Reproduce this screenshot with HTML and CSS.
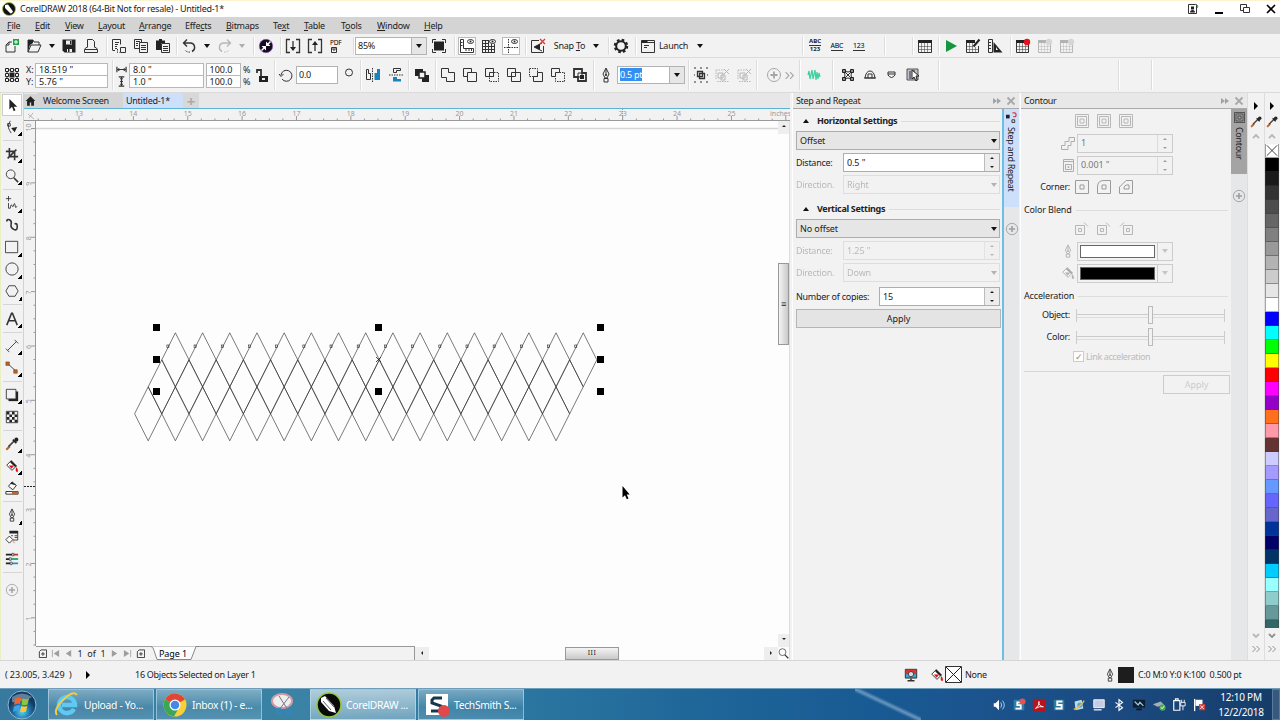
FILE: index.html
```html
<!DOCTYPE html>
<html lang="en">
<head>
    <meta charset="UTF-8">
    <meta name="viewport" content="width=device-width, initial-scale=1.0">
    <title>CorelDRAW 2018</title>
    <link rel="stylesheet" href="styles.css">
</head>
<body>
    <!-- Icon set -->
    <svg class="defs" width="0" height="0">
        <symbol id="new" viewBox="0 0 16 16"><path d="M8 4H5L2 7v7h9V8M5 4v3H2" class="l"/><path d="M9 1h6v6H9z" fill="#1fa24a"/><path d="M12 2v4M10 4h4" stroke="#fff"/></symbol>
        <symbol id="open" viewBox="0 0 16 16"><path d="M2 14V2h5l1 2h5v3" class="l"/><path d="M2 14L5 7h10l-3 7z" class="l"/><path d="M2 2h5v3L4 7l-2 6z" class="f"/></symbol>
        <symbol id="save" viewBox="0 0 16 16"><path d="M1.500 1.500h13v13h-11l-2-2z" class="f"/><path d="M5 2.500h6v4H5zM6 11h5v3H6z" fill="#eee"/><path d="M9 3h1.500v3H9zM7 11h1.500v3H7z" class="f"/></symbol>
        <symbol id="print" viewBox="0 0 16 16"><path d="M4.500 9.500v-8h5l2 2v6M4 9.500H3l-1.500 2v3h13v-3l-1.500-2h-1M2 11.500h12" class="l"/></symbol>
        <symbol id="cut" viewBox="0 0 16 16"><path d="M1.500 12.500v-11h8v5M4 4.500h4M4 6.500h3M4 8.500h2M4 10.500h2M2 12.500h2" class="l"/><path d="M9.500 14.500v-5h5v5z" class="l"/><path d="M6.500 11v3.500h2" class="l d"/></symbol>
        <symbol id="copy" viewBox="0 0 16 16"><path d="M6.500 10.500h-5v-9h7v3M3 3.500h4M3 5.500h2M3 7.500h2M6.500 4.500h8v10h-8zM8 7.500h5M8 9.500h5M8 11.500h5" class="l"/></symbol>
        <symbol id="paste" viewBox="0 0 16 16"><path d="M1 2.500h3V1h3v1.500h3V5H6v7H1z" class="f"/><path d="M6.500 5.500h8v9h-8zM8 8.500h5M8 10.500h5M8 12.500h5" class="l"/></symbol>
        <symbol id="undo" viewBox="0 0 16 16"><path d="M3 5h7a4.500 4.500 0 0 1 1 8.500M6 1.500L2.500 5 6 8.500" class="l" stroke-width="1.400"/><path d="M9 14a5 5 0 0 1-5-2" class="l d"/></symbol>
        <symbol id="redo" viewBox="0 0 16 16"><path d="M13 5H6a4.500 4.500 0 0 0-1 8.500M10 1.500L13.500 5 10 8.500" class="l" stroke-width="1.400"/><path d="M7 14a5 5 0 0 0 5-2" class="l d"/></symbol>
        <symbol id="connect" viewBox="0 0 16 16"><circle cx="8" cy="8" r="6.700" fill="#130b1e" stroke="#8d54b5" stroke-width=".7"/><path d="M3.500 12.500l3-3M12.500 3.500l-3 3" stroke="#fff" stroke-width="1.500"/><path d="M3.500 8H8v4.500zM12.500 8H8V3.500z" fill="#fff"/></symbol>
        <symbol id="import" viewBox="0 0 16 16"><path d="M5 1.500H1.500v13H5M11 1.500h3.500v13H11M8 3v8" class="l" stroke-width="1.300"/><path d="M5 9h6l-3 4z" class="f"/></symbol>
        <symbol id="export" viewBox="0 0 16 16"><path d="M5 1.500H1.500v13H5M11 1.500h3.500v13H11M8 13V5" class="l" stroke-width="1.300"/><path d="M5 7h6L8 3z" class="f"/></symbol>
        <symbol id="full" viewBox="0 0 16 16"><path d="M3 3.500h10v9H3z" class="f"/><path d="M1.500 5V1.500H5M11 1.500h3.500V5M14.500 11v3.500H11M5 14.500H1.500V11" class="l"/></symbol>
        <symbol id="rulers" viewBox="0 0 16 16"><path d="M1.500 1.500h3v9h10v4h-13zM2 4.500h1.500M2 7.500h1.500M7 11v2M10 11v2M12.500 11v2" class="l"/><ellipse cx="11.500" cy="3.500" rx="3" ry="2" class="l"/><circle cx="11.500" cy="3.500" r="1" class="f"/></symbol>
        <symbol id="grid" viewBox="0 0 16 16"><path d="M1.500 2v12.500M4.500 2v12.500M7.500 2v12.500M10.500 6v8.500M13.500 6v8.500M1 2.500h7M1 5.500h7M1 8.500h13M1 11.500h13M1 14.500h13" class="l"/><ellipse cx="11.500" cy="3.500" rx="3" ry="2" class="l"/><circle cx="11.500" cy="3.500" r="1" class="f"/></symbol>
        <symbol id="guides" viewBox="0 0 16 16"><path d="M5.500 1v14M1 9.500h14" class="l d"/><ellipse cx="11.500" cy="3.500" rx="3" ry="2" class="l"/><circle cx="11.500" cy="3.500" r="1" class="f"/></symbol>
        <symbol id="snapoff" viewBox="0 0 16 16"><path d="M9 2.500H1.500v12h12V8M12 5L4 9l8 4" class="l"/><path d="M4 9l6-3v6z" class="f"/><path d="M10 1l5 5M15 1l-5 5" stroke="#e02f30" stroke-width="1.200"/></symbol>
        <symbol id="gear" viewBox="0 0 16 16"><circle cx="8" cy="8" r="6" fill="none" stroke="#222" stroke-width="2.500" stroke-dasharray="2.500 2.210"/><circle cx="8" cy="8" r="4.800" fill="none" stroke="#222" stroke-width="2"/></symbol>
        <symbol id="launch" viewBox="0 0 16 16"><path d="M1.500 2.500h13v12h-13zM2 4.500h12M4 7.500h5M4 9.500h3" class="l"/><path d="M1.500 2.500h6v2h-6z" class="f"/></symbol>
        <symbol id="cal" viewBox="0 0 16 16"><path d="M1.500 2.500h13v12h-13z" class="l"/><path d="M1 2h14v3H1z" class="f"/><path d="M4.500 5v9M7.500 5v9M10.500 5v9M2 8.500h12M2 11.500h12" class="l t"/></symbol>
        <symbol id="play" viewBox="0 0 16 16"><path d="M3 2l11 6-11 6z" fill="#14963c"/></symbol>
        <symbol id="caledit" viewBox="0 0 16 16"><path d="M9 2.500H1.500v12h12V8" class="l"/><path d="M1 2h9v3H1z" class="f"/><path d="M4.500 5v9M7.500 5v9M10.500 9v5M2 8.500h6M2 11.500h12" class="l t"/><path d="M8.500 8.500l6-7" stroke="#222" stroke-width="2"/></symbol>
        <symbol id="triang" viewBox="0 0 16 16"><path d="M1.500 1.500h4v13h-4zM2 4.500h2M2 7.500h2M2 10.500h2" class="l"/><path d="M6.500 4l9 10.500h-9zM9 9v3h2z" class="f" fill-rule="evenodd"/></symbol>
        <symbol id="rec" viewBox="0 0 16 16"><path d="M1.500 2.500h12v12h-12z" class="l"/><path d="M1 2h9v3H1z" class="f"/><path d="M4.500 5v9M7.500 5v9M10.500 5v9M2 8.500h12M2 11.500h12" class="l t"/><circle cx="12" cy="4" r="3.200" class="dot"/></symbol>

        <symbol id="origin" viewBox="0 0 16 16"><path d="M3 3h10v10H3z" class="l"/><path d="M1.500 1.500h3v3h-3zM6.500 1.500h3v3h-3zM11.500 1.500h3v3h-3zM1.500 6.500h3v3h-3zM11.500 6.500h3v3h-3zM1.500 11.500h3v3h-3zM6.500 11.500h3v3h-3zM11.500 11.500h3v3h-3z" fill="#f2f2f2" stroke="#222"/><path d="M5.500 5.500h5v5h-5z" class="f"/></symbol>
        <symbol id="wide" viewBox="0 0 12 12"><path d="M1 3v6M11 3v6M1 6h10M3 4.500v3M9 4.500v3" class="l" stroke-width="1.300"/></symbol>
        <symbol id="tall" viewBox="0 0 12 12"><path d="M3 1h6M3 11h6M6 1v10M4.500 3h3M4.500 9h3M4.500 6h3" class="l" stroke-width="1.300"/></symbol>
        <symbol id="lock" viewBox="0 0 16 16"><path d="M5 9h9v6H5z" class="f"/><path d="M3 6V3h4v6" class="l w"/><path d="M8 11h3v2H8z" fill="#eee"/></symbol>
        <symbol id="rotate" viewBox="0 0 16 16"><path d="M4 12a5.500 5.500 0 1 0-1-4M1 7l2 2.500L5.500 7" class="l"/></symbol>
        <symbol id="ring" viewBox="0 0 16 16"><circle cx="8" cy="5.500" r="3.500" class="l"/></symbol>
        <symbol id="mirh" viewBox="0 0 16 16"><path d="M1.500 2.500h2v4h2v6h-4z" class="l"/><path d="M15 2h-3v4h-2.500v7H15z" fill="#1784bf"/><path d="M7.500 1v14" class="l d"/></symbol>
        <symbol id="mirv" viewBox="0 0 16 16"><path d="M12.500 1.500h-7v4h3v-2h4z" class="l"/><path d="M13 14.500H5V10h4v2h4z" fill="#1784bf"/><path d="M1 8h14" class="l d"/></symbol>
        <symbol id="order" viewBox="0 0 16 16"><path d="M1 2h8v7H1z" class="f"/><path d="M8 8h7v7H8z" class="f"/><path d="M5 5h6v6H5z" fill="#f2f2f2" stroke="#222" stroke-width="1.500"/></symbol>
        <symbol id="weld" viewBox="0 0 16 16"><path d="M1.500 1.500h7v4h6v9h-8v-4h-5z" class="l"/></symbol>
        <symbol id="trim" viewBox="0 0 16 16"><path d="M5.500 9.500h-4v-8h8v4M5.500 5.500h9v9h-9z" class="l"/></symbol>
        <symbol id="sect" viewBox="0 0 16 16"><path d="M1.500 1.500h8v8h-8zM5.500 5.500h4v4h-4z" class="l"/><path d="M10 5.500h4.500v9h-9V10" class="l d"/></symbol>
        <symbol id="simp" viewBox="0 0 16 16"><path d="M1.500 1.500h8v8h-8zM5.500 5.500h9v9h-9z" class="l"/></symbol>
        <symbol id="fmb" viewBox="0 0 16 16"><path d="M1.500 1.500h8v8h-8z" class="l d"/><path d="M9.500 5.500h5v9h-9v-5h4z" class="l"/></symbol>
        <symbol id="bmf" viewBox="0 0 16 16"><path d="M1.500 1.500h8v4h-4v4h-4z" class="l"/><path d="M9.500 5.500h5v9h-9v-5" class="l d"/></symbol>
        <symbol id="bound" viewBox="0 0 16 16"><path d="M2 2h8v4h4v8H6v-4H2z" class="l w"/><path d="M6 6h4v4H6z" class="l"/><path d="M8 8h4v4H8z" class="f"/></symbol>
        <symbol id="pen" viewBox="0 0 16 16"><path d="M8 1l3 6-2 4H7L5 7zM8 2v6M6 11.500h4V15H6z" class="l"/><circle cx="8" cy="8" r="1" class="f"/></symbol>
        <symbol id="group" viewBox="0 0 16 16"><path d="M1 1h2M7 1h2M13 1h2M1 15h2M7 15h2M13 15h2M1 8h1M14 8h1" class="l"/><path d="M4.500 4.500h5v5h-5zM6.500 6.500h5v5h-5z" class="l" stroke-width="1.300"/></symbol>
        <symbol id="ungroup" viewBox="0 0 16 16"><path d="M1 3h8M2 14.500h12M1 3v10" class="l d"/><path d="M3 6h5v5H3zM6 8h4v5H6zM9 2l5 5M14 2L9 7" class="l"/></symbol>
        <symbol id="plus" viewBox="0 0 16 16"><circle cx="8" cy="8" r="6.500" class="l"/><path d="M8 4.500v7M4.500 8h7" class="l w"/></symbol>
        <symbol id="wave" viewBox="0 0 16 16"><path d="M2 8l1-4 1 8 2-9 1 9 2-9 1 10 1-8 1 7 1-6 1 4" fill="none" stroke="#3fcf9b" stroke-width="1.200"/></symbol>
        <symbol id="env" viewBox="0 0 16 16"><path d="M4 4q4 2 8 0-2 4 0 8-4-2-8 0 2-4 0-8zM5 5l6 6M11 5l-6 6" class="l"/><path d="M2.500 2.500h3v3h-3zM10.500 2.500h3v3h-3zM2.500 10.500h3v3h-3zM10.500 10.500h3v3h-3z" fill="#888a99" stroke="#222"/></symbol>
        <symbol id="bell" viewBox="0 0 16 16"><path d="M3 11q1-7 5-7t5 7zM6 11V7h4v4M2 11h12" class="l"/></symbol>
        <symbol id="cup" viewBox="0 0 16 16"><path d="M5 5h7v3q-3.500 5-7 0zM5 7h7" class="l"/></symbol>
        <symbol id="pick2" viewBox="0 0 16 16"><path d="M2 2h11v11H2z" fill="#bfc1cc" stroke="#555"/><path d="M5 4v8M9 3v9" class="l"/><path d="M7 3v9l2-2 2 4 1-1-1-4h3z" fill="#fff" stroke="#222"/></symbol>

        <symbol id="arrow" viewBox="0 0 16 16"><path d="M5 1v12l3-3 2 5 2-1-2-4h4z" class="f"/></symbol>
        <symbol id="shape" viewBox="0 0 16 16"><path d="M6 1Q3 6 4 9t3 6M3 4h3v3H3z" class="l"/><path d="M7 9l7-1-3 6z" class="f"/></symbol>
        <symbol id="crop" viewBox="0 0 16 16"><path d="M5 1v10h10M1 5h10v10M3 13L13 3" class="l w"/></symbol>
        <symbol id="zoom" viewBox="0 0 16 16"><circle cx="6.500" cy="6" r="5" class="l"/><path d="M10 10l5 5" class="l w"/></symbol>
        <symbol id="free" viewBox="0 0 16 16"><path d="M4 0v6M1 3h6M4 8v6h2q1-6 2-3t2-1 2 3l2-1" class="l"/></symbol>
        <symbol id="media" viewBox="0 0 16 16"><path d="M2 4q0-3 3-2t2 5 3 6 4-3-3-3" class="l w"/></symbol>
        <symbol id="rect" viewBox="0 0 16 16"><path d="M.5 1.500h14v13H.5z" class="l"/></symbol>
        <symbol id="oval" viewBox="0 0 16 16"><circle cx="8" cy="8" r="7" class="l"/></symbol>
        <symbol id="poly" viewBox="0 0 16 16"><path d="M4.500 2h7L15 8l-3.500 6h-7L1 8z" class="l"/></symbol>
        <symbol id="text" viewBox="0 0 16 16"><path d="M2 15L7.500 1.500h1L14 15M4 10h8" class="l w"/></symbol>
        <symbol id="dim" viewBox="0 0 16 16"><path d="M3 13L13 3M1 11l4 4M11 1l4 4" class="l"/></symbol>
        <symbol id="conn" viewBox="0 0 16 16"><path d="M3 3l10 9" class="l"/><path d="M1 1h4v4H1zM10 10h4v4h-4z" fill="#b0672d" stroke="#704018" stroke-width=".6"/></symbol>
        <symbol id="shadow" viewBox="0 0 16 16"><path d="M4 4h11v11H4z" class="f"/><path d="M1.500 1.500h11v11h-11z" fill="#f2f2f2" stroke="#333"/></symbol>
        <symbol id="check" viewBox="0 0 16 16"><path d="M1.500 1.500h13v13h-13z" class="l"/><path d="M2 2h3v3H2zM8 2h3v3H8zM5 5h3v3H5zM11 5h3v3h-3zM2 8h3v3H2zM8 8h3v3H8zM5 11h3v3H5zM11 11h3v3h-3z" class="f"/></symbol>
        <symbol id="dropper" viewBox="0 0 16 16"><path d="M1.500 14.500l4-4" stroke="#b5652c" stroke-width="2.500"/><path d="M4 11l7-7" stroke="#444" stroke-width="2"/><path d="M9 3l4 4" stroke="#222" stroke-width="2"/><circle cx="13" cy="3" r="2.300" class="f"/></symbol>
        <symbol id="fill" viewBox="0 0 16 16"><path d="M7 2l6 6-5 5-6-6z" fill="#fff" stroke="#222"/><path d="M7 1.500L13.500 8l-2 1L6 4z" class="f"/><path d="M4.500 7.500h6L7.500 11z" fill="#d11"/><path d="M13 9q3 4 1 6-3-1-1-6z" fill="#d11"/></symbol>
        <symbol id="sfill" viewBox="0 0 16 16"><path d="M8 1l5 4-4 5-5-4z" fill="#fff" stroke="#222"/><path d="M6 3l2-2 5 4z" class="f"/><path d="M1 12h14v3H1z" fill="#fff" stroke="#222"/><path d="M8 12h7v3H8z" fill="#c4622a"/></symbol>
        <symbol id="props" viewBox="0 0 16 16"><path d="M5.500 1.500h9v10H9" class="l"/><path d="M5 1h10v3H5z" class="f"/><path d="M7 6.500h2M11 6.500h3M11 8.500h3" class="l"/><path d="M5 7l4 4-4 4-4-4z" fill="#fff" stroke="#222"/><path d="M9 13l2 2" stroke="#c4622a"/></symbol>
        <symbol id="sliders" viewBox="0 0 16 16"><path d="M1 3h7M1 8h4M1 13h5" stroke="#222" stroke-width="2"/><path d="M9 3h6" stroke="#b33" stroke-width="2"/><path d="M6 8h9" stroke="#299c58" stroke-width="2"/><path d="M8 13h7" stroke="#2590cc" stroke-width="2"/><path d="M8 1.500h2v3H8zM5 6.500h2v3H5zM6 11.500h2v3H6z" fill="#fff" stroke="#222" stroke-width=".7"/></symbol>
        <symbol id="home" viewBox="0 0 16 16"><path d="M8 1l7 7h-2v7H9v-5H7v5H3V8H1z" class="f"/></symbol>
        <symbol id="x" viewBox="0 0 10 10"><path d="M1.500 1.500l7 7M8.500 1.500l-7 7" class="l w"/></symbol>
        <symbol id="ff" viewBox="0 0 10 10"><path d="M1 2l4 3-4 3zM5 2l4 3-4 3z" class="f"/></symbol>
        <symbol id="chev" viewBox="0 0 10 10"><path d="M1.500 2l3 3-3 3M5.500 2l3 3-3 3" class="l"/></symbol>
        <symbol id="addpage" viewBox="0 0 10 10"><path d="M3.500 1h6v8.500h-8V3zM5.500 3.500v4M3.500 5.500h4" class="l"/></symbol>
        <symbol id="first" viewBox="0 0 10 10"><path d="M1.500 1v8" class="l"/><path d="M9 1v8L3 5z" class="f"/></symbol>
        <symbol id="prev" viewBox="0 0 10 10"><path d="M8 1v8L2 5z" class="f"/></symbol>
        <symbol id="cont" viewBox="0 0 14 14"><path d="M.5.5h13v13H.5zM2.500 2.500h9v9h-9zM5 5h4v4H5z" class="l"/></symbol>
        <symbol id="round" viewBox="0 0 14 14"><path d="M.5 13.500V7q0-6.500 6.500-6.500h6.500v13zM5 5h4v4H5z" class="l"/></symbol>
        <symbol id="bevel" viewBox="0 0 14 14"><path d="M.5 13.500V7L7 .5h6.500v13zM5 9V7l2-2h3v4z" class="l"/></symbol>
        <symbol id="miter" viewBox="0 0 14 14"><path d="M.5.500h13v13H.5zM5 5h4v4H5z" class="l"/></symbol>
        <symbol id="blend" viewBox="0 0 14 14"><path d="M.5 3.500h9v9h-9zM3.500 6.500h3v3h-3zM9 .5l4 4" class="l"/></symbol>
        <symbol id="steps" viewBox="0 0 14 14"><path d="M.5 13.500v-4H4v-4h4v-4h5.500v4H10v4H7v4z" class="l"/></symbol>
        <symbol id="offs" viewBox="0 0 14 14"><path d="M2.500 1.500h10v12h-10zM2 3.500h11M4.500 6.500h6v5h-6zM7 8.500h1v1H7z" class="l"/></symbol>
        <symbol id="steprep" viewBox="0 0 12 12"><path d="M0 3h4v4H0z" class="f"/><path d="M6.500 8.500h3v3h-3z" class="l"/><path d="M7 1q4-1 4 2t-3 2" fill="none" stroke="#d22" stroke-width="1.200"/></symbol>
    </svg>

    <div class="app">
        <header class="titlebar">
            <svg class="logo" viewBox="0 0 14 14"><circle cx="7" cy="7" r="6.500" fill="#111" stroke="#a7c34b" stroke-width=".8"/><path d="M3 3l3-.5 5 7-1 1.500-1.500.5L3 6z" fill="#fff"/></svg>
            <span class="title">CorelDRAW 2018 (64-Bit Not for resale) - Untitled-1*</span>
            <div class="window-buttons">
                <svg viewBox="0 0 12 12"><path d="M1.500 1.500h8v9h-8z" class="l"/><path d="M3 9.500Q3 7 5.500 7T8 9.500zM4 3.500h3v3H4z" class="f"/><path d="M8 1l3 2-1 2" fill="none" stroke="#2a9a57"/></svg>
                <svg viewBox="0 0 12 12"><path d="M2 10h8" stroke="#000" stroke-width="2"/></svg>
                <svg viewBox="0 0 12 12"><path d="M4 7.500H1.500v-6h6V4M4.500 4.500h6v5h-6z" class="l"/></svg>
                <svg viewBox="0 0 12 12"><path d="M2 2l8 8M10 2l-8 8" stroke="#000" stroke-width="1.600"/></svg>
            </div>
        </header>

        <nav class="menu">
            <span><u>F</u>ile</span><span><u>E</u>dit</span><span><u>V</u>iew</span><span><u>L</u>ayout</span><span><u>A</u>rrange</span><span>Effe<u>c</u>ts</span><span><u>B</u>itmaps</span><span>Te<u>x</u>t</span><span><u>T</u>able</span><span>T<u>o</u>ols</span><span><u>W</u>indow</span><span><u>H</u>elp</span>
        </nav>

        <div class="toolbar standard">
            <svg><use href="#new"/></svg><svg><use href="#open"/></svg><i class="drop"></i>
            <svg><use href="#save"/></svg><svg><use href="#print"/></svg><i class="sep"></i>
            <svg><use href="#cut"/></svg><svg><use href="#copy"/></svg><svg><use href="#paste"/></svg><i class="sep"></i>
            <svg><use href="#undo"/></svg><i class="drop"></i><svg class="off"><use href="#redo"/></svg><i class="drop off"></i><i class="sep"></i>
            <svg><use href="#connect"/></svg><i class="sep"></i>
            <svg><use href="#import"/></svg><svg><use href="#export"/></svg>
            <svg viewBox="0 0 16 16"><text x="1" y="7" class="tiny">PDF</text><path d="M2.500 9.500h5v5h-5zM4 10v2h2v-2" class="l"/></svg><i class="sep"></i>
            <div class="combo"><span>85%</span><b><i class="drop"></i></b></div>
            <svg><use href="#full"/></svg><i class="sep"></i>
            <svg class="on"><use href="#rulers"/></svg><svg><use href="#grid"/></svg><svg class="on"><use href="#guides"/></svg><i class="sep"></i>
            <svg><use href="#snapoff"/></svg><span>Snap <u>T</u>o</span><i class="drop"></i><i class="sep"></i>
            <svg><use href="#gear"/></svg><i class="sep"></i>
            <svg><use href="#launch"/></svg><span>Launch</span><i class="drop"></i><i class="sep"></i>
            <div class="stack"><span>ABC</span><span>123</span></div>
            <svg viewBox="0 0 16 16"><text x="1.500" y="10" class="small">ABC</text><path d="M2 12.500h12" class="l"/></svg>
            <svg viewBox="0 0 16 16"><text x="2" y="10" class="small">123</text><path d="M2 12.500h12" class="l"/></svg><i class="sep"></i><i class="sep"></i>
            <svg><use href="#cal"/></svg><i class="sep"></i>
            <svg><use href="#play"/></svg><svg><use href="#caledit"/></svg><svg><use href="#triang"/></svg><i class="sep"></i>
            <svg class="red"><use href="#rec"/></svg><svg class="off"><use href="#rec"/></svg><svg class="off"><use href="#rec"/></svg>
        </div>

        <div class="toolbar property">
            <svg><use href="#origin"/></svg>
            <div class="pair"><span>X:</span><span>Y:</span></div>
            <div class="pair boxes"><span>18.519 "</span><span>5.76 "</span></div><i class="sep"></i>
            <div class="pair"><svg><use href="#wide"/></svg><svg><use href="#tall"/></svg></div>
            <div class="pair boxes"><span>8.0 "</span><span>1.0 "</span></div>
            <div class="pair boxes scale"><span>100.0</span><span>100.0</span></div>
            <div class="pair percent"><span>%</span><span>%</span></div>
            <svg><use href="#lock"/></svg><i class="sep"></i>
            <svg><use href="#rotate"/></svg><div class="combo"><span>0.0</span></div><svg><use href="#ring"/></svg><i class="sep"></i>
            <svg><use href="#mirh"/></svg><svg><use href="#mirv"/></svg><i class="sep"></i>
            <svg><use href="#order"/></svg><i class="sep"></i>
            <svg><use href="#weld"/></svg><svg><use href="#trim"/></svg><svg><use href="#sect"/></svg><svg><use href="#simp"/></svg><svg><use href="#fmb"/></svg><svg><use href="#bmf"/></svg><svg><use href="#bound"/></svg><i class="sep"></i>
            <svg><use href="#pen"/></svg>
            <div class="combo"><span><mark>0.5 pt</mark></span><b><i class="drop"></i></b></div><i class="sep"></i>
            <svg><use href="#group"/></svg><svg class="off"><use href="#ungroup"/></svg><svg class="off"><use href="#ungroup"/></svg><i class="sep"></i>
            <svg class="dim end"><use href="#plus"/></svg><svg class="dim chev"><use href="#chev"/></svg><i class="sep"></i>
            <svg><use href="#wave"/></svg><i class="sep"></i>
            <svg><use href="#env"/></svg><svg><use href="#bell"/></svg><svg><use href="#cup"/></svg><svg><use href="#pick2"/></svg><i class="sep"></i><i class="sep"></i><i class="sep"></i>
        </div>

        <main>
            <aside class="toolbox">
                <svg class="fly on"><use href="#arrow"/></svg>
                <svg class="fly"><use href="#shape"/></svg><hr>
                <svg class="fly"><use href="#crop"/></svg>
                <svg class="fly"><use href="#zoom"/></svg><hr>
                <svg class="fly"><use href="#free"/></svg>
                <svg><use href="#media"/></svg>
                <svg class="fly"><use href="#rect"/></svg>
                <svg class="fly"><use href="#oval"/></svg>
                <svg class="fly"><use href="#poly"/></svg><hr>
                <svg class="fly"><use href="#text"/></svg><hr>
                <svg class="fly"><use href="#dim"/></svg>
                <svg class="fly"><use href="#conn"/></svg><hr>
                <svg class="fly"><use href="#shadow"/></svg>
                <svg><use href="#check"/></svg><hr>
                <svg class="fly"><use href="#dropper"/></svg>
                <svg class="fly"><use href="#fill"/></svg>
                <svg><use href="#sfill"/></svg><hr>
                <svg class="fly"><use href="#pen"/></svg>
                <svg><use href="#props"/></svg>
                <svg><use href="#sliders"/></svg><hr class="last">
                <svg class="dim"><use href="#plus"/></svg>
            </aside>

            <section class="document">
                <div class="tabs">
                    <svg><use href="#home"/></svg><span class="welcome">Welcome Screen</span><span class="tab">Untitled-1*</span><span class="add">+</span>
                </div>
                <svg class="hruler" id="hruler" viewBox="24 109 766 12"></svg>
                <div class="work">
                    <svg class="vruler" id="vruler" viewBox="24 121 12 539"></svg>
                    <div class="view">
                        <svg id="canvas" viewBox="36 121 742 525">
                            <path d="M36 128.500H778" stroke="#d5d5d5" stroke-width="1.500"/>
                            <g id="lattice" fill="none" stroke="#333" stroke-width=".65"></g>
                            <g id="handles"></g>
                            <path d="M376 357l5 5M381 357l-5 5" stroke="#222" stroke-width=".8"/>
                            <path d="M622.500 486v11.500l2.500-2.300 1.800 4 1.700-.8-1.800-3.900h3z"/>
                        </svg>
                        <div class="pagebar">
                            <svg><use href="#addpage"/></svg><svg class="dim"><use href="#first"/></svg><svg class="dim"><use href="#prev"/></svg>
                            <span>1&nbsp; of&nbsp; 1</span>
                            <svg class="dim flip"><use href="#prev"/></svg><svg class="dim flip"><use href="#first"/></svg><svg><use href="#addpage"/></svg>
                            <svg class="pagetab" viewBox="0 0 48 14"><path d="M0 .5q2 0 3 4l3 9h34l5-13h3" fill="#fdfdfd" stroke="#888"/><text x="8" y="10.500">Page 1</text></svg>
                            <div class="strip"></div>
                            <div class="hscroll"><i class="left"></i><b>III</b><i class="right"></i></div>
                        </div>
                    </div>
                    <div class="vscroll"><i class="up"></i><b>≡</b><i class="down"></i><svg><use href="#zoom"/></svg></div>
                </div>
            </section>

            <section class="docker step">
                <div class="docker-title"><span>Step and Repeat</span><svg><use href="#ff"/></svg><svg><use href="#x"/></svg></div>
                <div class="docker-main">
                    <div class="docker-body">
                        <h3><i></i>Horizontal Settings</h3>
                        <div class="row"><div class="select">Offset<i class="drop"></i></div></div>
                        <div class="row"><label>Distance:</label><div class="spin">0.5 "<em></em></div></div>
                        <div class="row off"><label>Direction.</label><div class="select">Right<i class="drop"></i></div></div>
                        <h3><i></i>Vertical Settings</h3>
                        <div class="row"><div class="select">No offset<i class="drop"></i></div></div>
                        <div class="row off"><label>Distance:</label><div class="spin">1.25 "<em></em></div></div>
                        <div class="row off"><label>Direction.</label><div class="select">Down<i class="drop"></i></div></div>
                        <div class="row copies"><label>Number of copies:</label><div class="spin">15<em></em></div></div>
                        <button>Apply</button>
                    </div>
                    <div class="side">
                        <div class="side-tab blue"><svg><use href="#steprep"/></svg><span>Step and Repeat</span></div>
                        <svg class="dim"><use href="#plus"/></svg>
                    </div>
                </div>
            </section>

            <section class="docker contour">
                <div class="docker-title"><span>Contour</span><svg><use href="#ff"/></svg><svg><use href="#x"/></svg></div>
                <div class="docker-main">
                    <div class="docker-body">
                        <div class="line"><label></label><div class="icons off"><svg><use href="#cont"/></svg><svg><use href="#cont"/></svg><svg><use href="#cont"/></svg></div></div>
                        <div class="line off"><label><svg><use href="#steps"/></svg></label><div class="spin">1<em></em></div></div>
                        <div class="line off"><label><svg><use href="#offs"/></svg></label><div class="spin">0.001 "<em></em></div></div>
                        <div class="line"><label>Corner:</label><div class="icons corner"><svg><use href="#miter"/></svg><svg><use href="#round"/></svg><svg><use href="#bevel"/></svg></div></div>
                        <h4>Color Blend</h4>
                        <div class="line"><label></label><div class="icons off"><svg><use href="#blend"/></svg><svg><use href="#blend"/></svg><svg class="flip"><use href="#blend"/></svg></div></div>
                        <div class="line faded"><label><svg><use href="#pen"/></svg></label><div class="color"><b class="white"></b><u><i class="drop"></i></u></div></div>
                        <div class="line faded"><label><svg><use href="#fill"/></svg></label><div class="color"><b class="black"></b><u><i class="drop"></i></u></div></div>
                        <h4>Acceleration</h4>
                        <div class="line"><label>Object:</label><div class="slider"><i></i></div></div>
                        <div class="line"><label>Color:</label><div class="slider"><i></i></div></div>
                        <div class="link"><span class="box">✓</span>Link acceleration</div>
                        <div class="foot"><button>Apply</button></div>
                    </div>
                    <div class="side">
                        <div class="side-tab gray"><svg><use href="#cont"/></svg><span>Contour</span></div>
                        <svg class="dim"><use href="#plus"/></svg>
                    </div>
                </div>
            </section>

            <aside class="palette">
                <i class="menu-arrow"></i><svg><use href="#dropper"/></svg><svg class="caret light" viewBox="0 0 10 10"><path d="M2 7l3-3 3 3" class="l w"/></svg>
                <div class="swatches"></div>
                <svg class="caret light" viewBox="0 0 10 10"><path d="M2 3l3 3 3-3" class="l w"/></svg><svg class="caret"><use href="#chev"/></svg>
            </aside>
            <aside class="palette">
                <i class="menu-arrow"></i><svg><use href="#dropper"/></svg><svg class="caret light" viewBox="0 0 10 10"><path d="M2 7l3-3 3 3" class="l w"/></svg>
                <div class="swatches" id="swatches"></div>
                <svg class="caret" viewBox="0 0 10 10"><path d="M2 3l3 3 3-3" class="l w"/></svg><svg class="caret"><use href="#chev"/></svg>
            </aside>
        </main>

        <footer class="status">
            <span class="coords">( 23.005, 3.429&nbsp; )</span><i class="menu-arrow"></i>
            <span class="selected">16 Objects Selected on Layer 1</span>
            <svg viewBox="0 0 16 16"><path d="M1.500 1.500h13v10h-13z" fill="#39a6d5" stroke="#222"/><path d="M2 2h12v5H2z" fill="#de3333"/><circle cx="8" cy="7" r="3" fill="#ddd" stroke="#333"/><path d="M4 14.500h8M8 12v2" class="l w"/></svg>
            <svg class="bucket"><use href="#fill"/></svg>
            <svg class="none" viewBox="0 0 17 17"><path d="M.5.500h16v16H.5z" fill="#fff" stroke="#333"/><path d="M1 1l15 15M16 1L1 16" stroke="#222"/></svg>
            <span class="fillname">None</span>
            <svg><use href="#pen"/></svg><b></b><span>C:0 M:0 Y:0 K:100&nbsp; 0.500 pt</span>
        </footer>

        <div class="taskbar">
            <svg class="start" viewBox="0 0 30 30"><defs><radialGradient id="orb" cx=".5" cy=".75"><stop offset="0" stop-color="#55d2f2"/><stop offset=".6" stop-color="#1c6ea6"/><stop offset="1" stop-color="#123a63"/></radialGradient></defs><circle cx="15" cy="15" r="14" fill="url(#orb)" stroke="#8fb9d2"/><path d="M5 7q10-7 20 0-9 6-20 5z" fill="#fff" opacity=".35"/><path d="M8 9q3-2 6-1l-1 6q-3-1-6 1z" fill="#f1642d"/><path d="M15.500 8.500q3 1.500 6.500 0l-1.500 6q-3 1-6 0z" fill="#8cc63e"/><path d="M7 16.500q3-2 6-1l-1 5.500q-3-1-6 1z" fill="#3fa2e8"/><path d="M14.300 16q3 1.500 6 0L19 21.500q-3 1.500-6 0z" fill="#fcc92e"/></svg>
            <div class="task"><svg viewBox="0 0 26 26"><path d="M20 17a8 8 0 1 1 1-4H8" fill="none" stroke="#5ec9f3" stroke-width="4.500"/><path d="M3 23Q-1 18 9 8T23 3" fill="none" stroke="#f4cd3c" stroke-width="2"/></svg>Upload - Yo...</div>
            <div class="task"><svg viewBox="0 0 26 26"><circle cx="13" cy="13" r="11.500" fill="#f9cf3a"/><path d="M13 13L3.100 7.200A11.500 11.500 0 0 1 23 7.400z" fill="#e0453a"/><path d="M13 13h0L3.100 7.200A11.500 11.500 0 0 0 12 24.500l5-9z" fill="#3aa757"/><circle cx="13" cy="13" r="5.500" fill="#fff"/><circle cx="13" cy="13" r="4.300" fill="#4587ea"/></svg>Inbox (1) - e...</div>
            <div class="task snip"><svg viewBox="0 0 26 26"><ellipse cx="12" cy="9" rx="10" ry="7" fill="#eee" stroke="#d39aa6" stroke-width="2"/><path d="M9 4l9 14M19 5L9 18" stroke="#778"/><circle cx="9" cy="19" r="2.500" fill="none" stroke="#3287c1" stroke-width="1.500"/><circle cx="18" cy="20" r="2.500" fill="none" stroke="#3287c1" stroke-width="1.500"/></svg></div>
            <div class="task active"><svg viewBox="0 0 26 26"><circle cx="13" cy="13" r="12" fill="#0a0a0a" stroke="#93c83d" stroke-width="1.600"/><path d="M5 6l4-2 9 10 2 7-7-2L5 10z" fill="#fff"/><path d="M7 9l8 9M10 6l8 9" stroke="#111" stroke-width=".7"/></svg>CorelDRAW ...</div>
            <div class="task"><svg viewBox="0 0 26 26"><path d="M2 2h22v21H2z" fill="#fff"/><path d="M18 6h-8L8 8v3l9 3v3l-2 2H7" fill="none" stroke="#15384f" stroke-width="3"/><circle cx="20" cy="19" r="6" fill="#e0494c"/></svg>TechSmith S...</div>
            <div class="tray">
                <svg viewBox="0 0 16 16"><path d="M2 6h2l4-4v12l-4-4H2z" fill="#fff"/><path d="M10 5q2 3 0 6M12 3q4 5 0 10" stroke="#bde" fill="none"/></svg>
                <svg viewBox="0 0 16 16"><path d="M2 2h12v12H2z" fill="#2f80a8"/><path d="M11 5H6v3h4v4H4" stroke="#fff" stroke-width="2" fill="none"/><circle cx="12" cy="4" r="3.500" fill="#e25355"/></svg>
                <svg viewBox="0 0 16 16"><path d="M1 1h14v14H1z" fill="#b8141b"/><path d="M4 12q5-4 4-8-1 5 5 6-5-1-9 2z" stroke="#fff" fill="none"/></svg>
                <svg viewBox="0 0 16 16"><path d="M2 2h12v12H2z" fill="#2d7c9c"/><path d="M12 4H6v4h5v4H4" stroke="#fff" stroke-width="2.200" fill="none"/></svg>
                <svg viewBox="0 0 16 16"><path d="M3 4l8-2 2 10-9 2z" fill="#b9dceb"/><circle cx="9" cy="8" r="3" fill="#58a6d5"/><path d="M2 13Q9 11 14 3" stroke="#eebb3c" stroke-width="1.500" fill="none"/></svg>
                <svg viewBox="0 0 16 16"><path d="M2 2h12v9H2z" fill="#c9cbe0" stroke="#fff"/><path d="M2 13.500h9" stroke="#eee" stroke-width="1.500"/></svg>
                <svg viewBox="0 0 16 16"><path d="M4 5l8 6-4 3V2l4 3-8 6" fill="none" stroke="#fff" stroke-width="1.300"/></svg>
                <svg viewBox="0 0 16 16"><path d="M1 2h14v9H1z" fill="#111d2a"/><path d="M3 4l4 4 2-3 4 4" stroke="#8ac7ec" fill="none" stroke-width="1.500"/><path d="M5 13h6" stroke="#111" stroke-width="2"/></svg>
                <svg viewBox="0 0 16 16"><path d="M1 7l9-3 4 4-8 2z" fill="#a6acb9"/><circle cx="12" cy="11" r="3.500" fill="#48ad4e"/><path d="M10 11l2 1 2-3" stroke="#fff" fill="none"/></svg>
                <svg viewBox="0 0 16 16"><path d="M2 3h7v11H2zM4 1h3v2H4z" fill="none" stroke="#fff" stroke-width="1.300"/><path d="M10 5h5v4h-5zM11 2v3M14 2v3M12.500 9v5" stroke="#fff" fill="none"/></svg>
                <svg viewBox="0 0 16 16"><path d="M3 1v14" stroke="#fff" stroke-width="1.500"/><path d="M4 2h8v7H4z" fill="#fff"/><path d="M8 7h7v7H8z" fill="#d33b3b"/><path d="M9.500 8.500l4 4M13.500 8.500l-4 4" stroke="#fff"/></svg>
            </div>
            <div class="clock">12:10 PM<br>12/2/2018</div>
            <div class="peek"></div>
        </div>
    </div>

    <script>
        const INCH = 54.37;

        // Rulers: a tick each quarter inch and a label on each inch
        function drawRulers() {
            let h = '<path d="M24 120.500H790" stroke="#999"/><text x="770" y="116">inches</text><path d="M28 114l6 5M33 113l-4 5" stroke="#888" stroke-width=".7"/>';
            for (let q = -3; q < 53; q++) {
                const x = 79 + q * INCH / 4;
                if (x < 38) continue;
                h += `<path d="M${x} ${q % 4 ? 118.5 : 116}V120"/>`;
                if (q % 4 === 0 && q < 52 && q >= 0) h += `<text x="${x - 4}" y="116">${13 + q / 4}</text>`;
            }
            h += '<path d="M622.500 109v11" stroke-dasharray="1 1"/>';
            document.getElementById('hruler').innerHTML = h;

            let v = '<path d="M35.500 121V646" stroke="#999"/>';
            for (let q = 0; q < 39; q++) {
                const y = 128.5 + q * INCH / 4;
                v += `<path d="M${q % 4 ? 33.5 : 31} ${y}H35"/>`;
                if (q % 4 === 0) v += `<text transform="translate(31 ${y + 3}) rotate(-90)">${10 - q / 4}</text>`;
            }
            v += '<path d="M24 486.500h11" class="mark"/>';
            document.getElementById('vruler').innerHTML = v;
        }

        // Three staggered rows of 16 diamonds, half an inch wide and one inch high
        function drawLattice() {
            const w = 27.19, hw = w / 2, hh = 27;
            let out = '';
            [[175.4, 332.8], [161.8, 359.8], [148.2, 386.8]].forEach(([cx, top], row) => {
                for (let i = 0; i < 16; i++) {
                    const x = cx + i * w;
                    out += `<path d="M${x} ${top}l${hw} ${hh}l${-hw} ${hh}l${-hw} ${-hh}z"/>`;
                    if (row === 0) out += `<rect x="${x - 8.5}" y="345" width="2" height="2.500"/>`;
                }
            });
            document.getElementById('lattice').innerHTML = out;

            let handles = '';
            for (const x of [153, 375, 597])
                for (const y of [324, 356, 388])
                    if (x !== 375 || y !== 356) handles += `<rect x="${x}" y="${y}" width="7" height="7"/>`;
            document.getElementById('handles').innerHTML = handles;
        }

        const colors = ['none', '#000', '#1a1a1a', '#333', '#4d4d4d', '#666', '#808080', '#999', '#b3b3b3', '#ccc', '#e6e6e6', '#fff',
            '#00f', '#0ff', '#0f0', '#ff0', '#f00', '#f0f', '#9400c8', '#ff6f1c', '#ff99aa', '#663333', '#ccccff', '#a49aff',
            '#6699ff', '#6666ff', '#6666cc', '#003399', '#000066', '#003366', '#00ccff', '#99ffff', '#8fcccc', '#669999', '#336666'];
        document.getElementById('swatches').innerHTML = colors.map(c =>
            c === 'none' ? '<svg viewBox="0 0 14 14"><path d="M0 0h14v14H0z" fill="#fff"/><path d="M1 1l12 12M13 1L1 13" stroke="#222"/></svg>'
                : `<i style="background:${c}"></i>`).join('');

        drawRulers();
        drawLattice();
    </script>
</body>
</html>
```
FILE: styles.css
```css
* {
    box-sizing: border-box;
}

body {
    margin: 0;
    font-family: 'Noto Sans', 'Open Sans', sans-serif;
    font-size: 9px;
    line-height: 12px;
    letter-spacing: -0.27px;
    color: #222;
    overflow: hidden;
}

.app {
    width: 1280px;
    height: 720px;
    display: flex;
    flex-direction: column;
    background: #f2f2f2;
}

.defs {
    position: absolute;
}

svg {
    display: block;
    flex: none;
    width: 16px;
    height: 16px;
}

i, em {
    font-style: normal;
}

u {
    text-underline-offset: 1px;
}

.l { fill: none; stroke: #333; }
.w { stroke-width: 1.8; }
.t { stroke-width: 0.5; }
.d { stroke-dasharray: 1.5 1; }
.f { fill: #222; }
.tiny { font: 6.5px 'Noto Sans', sans-serif; }
.small { font: 7px 'Noto Sans', sans-serif; }
.dot { fill: var(--dot, #999); }
.red { --dot: #e3121d; }
.off { opacity: 0.3; }
.dim { opacity: 0.4; }
.flip { transform: scaleX(-1); }

.drop {
    width: 0;
    height: 0;
    border: 3.5px solid transparent;
    border-top: 4px solid #111;
    border-bottom: 0;
}

.menu-arrow {
    width: 0;
    height: 0;
    border: 4px solid transparent;
    border-left: 4px solid #000;
    border-right: 0;
}

/* Title and menu */
.titlebar {
    height: 17px;
    display: flex;
    align-items: center;
    padding: 0 3px 0 2px;
    background: #fff;
    border-top: 1px solid #fdf3cf;
}

.logo {
    width: 14px;
    height: 14px;
    margin-right: 4px;
}

.window-buttons {
    display: flex;
    gap: 14px;
    margin-left: auto;
}

.window-buttons svg {
    width: 12px;
    height: 12px;
}

.menu {
    height: 17px;
    background: #d4d4d4;
    display: grid;
    grid-template-columns: 28px 30px 33px 41px 46px 41px 47px 31px 37px 36px 47px 40px;
    padding: 1px 0 0 7px;
    align-items: center;
}

/* Toolbars */
.toolbar {
    display: grid;
    align-items: center;
    justify-items: center;
    border-bottom: 1px solid #dadada;
    padding-left: 1px;
    white-space: nowrap;
}

.standard {
    height: 24px;
    grid-template-columns:
        22px 22px 13px 22px 22px 6px 22px 22px 22px 4px
        22px 14px 22px 11px 8px 22px 5px 22px 22px 22px
        7px 72px 23px 6px 22px 22px 22px 5px 22px 41px
        12px 8px 22px 5px 22px 29px 24px 92px 22px 22px
        22px 16px 28px 22px 4px 22px 22px 22px 6px 22px 22px 22px;
}

.property {
    height: 35px;
    grid-template-columns:
        22px 12px 73px 6px 15px 75px 38px 10px 20px 4px
        20px 42px 22px 2px 22px 23px 3px 24px 3px 22px
        22px 22px 22px 22px 22px 22px 4px 22px 68px 5px
        22px 22px 22px 2px 24px 14px 5px 26px 7px 28px
        16px 26px 18px 18px 180px 33px;
}

.toolbar .sep {
    justify-self: end;
    width: 1px;
    height: 18px;
    background: #dcdcdc;
    border-right: 1px solid #fff;
    box-sizing: content-box;
}

.property .sep {
    height: 30px;
}

.toolbar .end {
    justify-self: end;
}

.toolbar svg.on {
    width: 18px;
    height: 18px;
    padding: 1px;
    background: #fff;
    outline: 1px solid #bbb;
    outline-offset: -1px;
}

.toolbar .chev {
    width: 11px;
    height: 11px;
}

.stack {
    display: grid;
    font-size: 6px;
    font-weight: bold;
    line-height: 7px;
    letter-spacing: 0;
    text-align: center;
}

.stack span:first-child {
    border-bottom: 1px solid #333;
}

.combo {
    height: 18px;
    width: 100%;
    display: flex;
    background: #fff;
    border: 1px solid #b3b3b3;
}

.combo span {
    flex: 1;
    padding: 2px;
}

.combo b {
    width: 15px;
    display: grid;
    place-items: center;
    background: #e6e6e6;
    border-left: 1px solid #b3b3b3;
}

mark {
    background: #3390f0;
    color: #fff;
}

.pair {
    display: grid;
    grid-template-rows: 12px 12px;
    width: 100%;
    align-items: center;
}

.pair svg {
    width: 11px;
    height: 11px;
    justify-self: center;
}

.pair > span {
    padding-left: 3px;
    line-height: 11px;
    letter-spacing: 0;
}

.percent > span {
    padding-left: 1px;
}

.boxes > span {
    height: 13px;
    background: #fff;
    border: 1px solid #b8b8b8;
}

.boxes.scale {
    width: 35px;
}

/* Main area */
main {
    display: flex;
    height: 567px;
}

.toolbox {
    width: 24px;
    border-left: 1px solid #eaeec0;
    border-right: 1px solid #d2d2d2;
    padding-top: 1px;
    display: flex;
    flex-direction: column;
    align-items: center;
}

.toolbox svg {
    width: 20px;
    height: 22px;
    padding: 4px 3px;
}

.toolbox svg.on {
    background: #fff;
    outline: 1px solid #ccc;
    outline-offset: -1px;
}

.toolbox .fly {
    background: linear-gradient(135deg, transparent 50%, #000 50%) 100% 90% / 4px 4px no-repeat;
}

.toolbox .fly.on {
    background-color: #fff;
}

.toolbox hr {
    width: 19px;
    margin: 2px 0 2.2px;
    border: 0;
    border-top: 1px solid #d5d5d5;
}

.toolbox .last {
    margin-bottom: 6px;
}

.document {
    width: 766px;
    display: flex;
    flex-direction: column;
}

.tabs {
    height: 16px;
    display: flex;
    align-items: center;
    background: #e7e7e7;
    border-bottom: 1.5px solid #5bb3d8;
}

.tabs svg {
    width: 13px;
    height: 14px;
    padding: 1px;
    background: #d4d4d4;
}

.tabs span {
    height: 15px;
    line-height: 16px;
}

.tabs .welcome {
    width: 86px;
    padding-left: 6px;
    background: #d4d4d4;
}

.tabs .tab {
    width: 60px;
    padding-left: 3px;
    background: #cce0fb;
}

.tabs .add {
    width: 16px;
    text-align: center;
    background: #d8d8d8;
    color: #aaa;
    font-size: 15px;
    font-weight: bold;
}

.hruler {
    width: 766px;
    height: 12px;
}

.hruler path, .vruler path {
    stroke: #999;
    fill: none;
}

.vruler .mark {
    stroke: #222;
    stroke-dasharray: 2 1;
}

.hruler text, .vruler text {
    font-size: 7px;
    letter-spacing: 0;
    fill: #999;
}

.work {
    display: flex;
    height: 539px;
}

.vruler {
    width: 12px;
    height: 539px;
}

.view {
    width: 742px;
}

#canvas {
    width: 742px;
    height: 525px;
    background: #fdfdfd;
}

.pagebar {
    height: 14px;
    display: flex;
    align-items: center;
    border-top: 1px solid #999;
}

.pagebar svg {
    width: 9px;
    height: 9px;
    margin: 0 2px;
}

.pagebar span {
    width: 33px;
    text-align: center;
    letter-spacing: 0;
}

.pagebar .pagetab {
    width: 48px;
    height: 14px;
    margin: -1px 0 0 4px;
    letter-spacing: -0.1px;
}

.strip {
    width: 216px;
    height: 13px;
    border-right: 1px solid #999;
}

.hscroll {
    flex: 1;
    height: 14px;
    margin-top: -1px;
    display: flex;
    align-items: center;
    background: #fdfdfd;
}

.hscroll b {
    width: 54px;
    height: 13px;
    margin-left: 136px;
    text-align: center;
    font-size: 7px;
    font-weight: normal;
    letter-spacing: 0.5px;
    line-height: 10px;
    border: 1px solid #999;
    background: linear-gradient(#f4f4f4, #c9c9c9);
}

.hscroll i {
    width: 14px;
    height: 13px;
    background: #eee;
}

.hscroll .right {
    margin-left: auto;
}

.hscroll i::before, .vscroll i::before {
    content: '';
    display: block;
    width: 0;
    margin: 4px auto;
    border: 2.5px solid transparent;
}

.hscroll .left::before { border-right-color: #222; border-left: 0; }
.hscroll .right::before { border-left-color: #222; border-right: 0; }

.vscroll {
    width: 12px;
    display: flex;
    flex-direction: column;
    background: #fdfdfd;
    border-right: 1px solid #ddd;
}

.vscroll i {
    height: 13px;
    background: #eee;
}

.vscroll .up::before { border-bottom-color: #222; border-top: 0; }
.vscroll .down::before { border-top-color: #222; border-bottom: 0; }

.vscroll b {
    height: 82px;
    margin-top: 129px;
    display: grid;
    place-items: center;
    border: 1px solid #999;
    background: linear-gradient(90deg, #f4f4f4, #c9c9c9);
    font-weight: normal;
}

.vscroll .down {
    margin-top: auto;
}

.vscroll svg {
    width: 11px;
    height: 13px;
}

/* Dockers */
.docker {
    margin-left: 2px;
    display: flex;
    flex-direction: column;
    border-left: 1px solid #fff;
}

.step { width: 227px; }
.contour { width: 227px; margin-left: 1px; }

.docker-title {
    height: 16px;
    display: flex;
    align-items: center;
    padding: 0 3px;
    background: #e8e8e8;
    border-bottom: 1px solid #aaa;
    letter-spacing: -0.32px;
}

.docker-title span {
    margin-right: auto;
}

.docker-title svg {
    width: 10px;
    height: 10px;
    margin-left: 4px;
    opacity: 0.35;
}

.docker-main {
    flex: 1;
    display: flex;
}

.docker-body {
    width: 210px;
}

.step .docker-body {
    width: 211px;
    border-right: 2px solid #6bbfe0;
    padding: 0 2px 0 3px;
}

h3 {
    height: 22px;
    margin: 0;
    padding: 2px 0 0 7px;
    display: flex;
    align-items: center;
    font-size: 9px;
    letter-spacing: -0.32px;
}

h3 i {
    border: 3px solid transparent;
    border-bottom: 4px solid #111;
    border-top: 0;
    margin-right: 8px;
}

h3::after, h4::after {
    content: '';
    flex: 1;
    margin-left: 4px;
    border-top: 1px solid #ddd;
}

.row {
    height: 19px;
    width: 204px;
    margin-bottom: 3px;
    display: flex;
    align-items: center;
}

.row label {
    width: 47px;
}

.row.off {
    opacity: 0.28;
}

.row.copies {
    margin: 5px 0 3px;
}

.copies label {
    width: 83px;
}

.select, .spin {
    flex: 1;
    height: 19px;
    display: flex;
    align-items: center;
    justify-content: space-between;
    padding-left: 3px;
    border: 1px solid #adadad;
    background: #e6e6e6;
    letter-spacing: -0.1px;
}

.select .drop {
    margin-right: 2px;
}

.spin {
    background: #fff;
}

.off .select, .off .spin {
    background: transparent;
}

.spin em {
    width: 15px;
    height: 17px;
    display: flex;
    flex-direction: column;
    align-items: center;
    justify-content: space-between;
    padding: 3px 0;
    background: #ededed;
    border-left: 1px solid #bbb;
}

.spin em::before, .spin em::after {
    content: '';
    border: 2px solid transparent;
    border-bottom: 2.5px solid #222;
    border-top: 0;
}

.spin em::after {
    transform: scaleY(-1);
}

button {
    width: 205px;
    height: 19px;
    padding: 0;
    border: 1px solid #b5b5b5;
    background: #e4e4e4;
    color: #222;
    font: inherit;
}

.side {
    width: 16px;
    background: #e6e7e8;
    display: flex;
    flex-direction: column;
    align-items: center;
}

.side > svg {
    width: 14px;
    height: 14px;
    margin-top: 15px;
}

.side-tab {
    width: 100%;
    padding-top: 3px;
    display: flex;
    flex-direction: column;
    align-items: center;
    gap: 4px;
}

.side-tab svg {
    width: 11px;
    height: 11px;
}

.side-tab span {
    writing-mode: vertical-rl;
    line-height: 13px;
    letter-spacing: -0.32px;
}

.blue {
    height: 98px;
    background: #cce0fb;
}

.gray {
    height: 65px;
    background: #a4a4a4;
}

/* Contour rows */
.contour .docker-body {
    padding-top: 1px;
}

.line {
    height: 22px;
    display: flex;
    align-items: center;
}

.line label {
    width: 49px;
    display: flex;
    justify-content: flex-end;
}

.line label svg {
    width: 14px;
    height: 14px;
    margin-right: -5px;
}

.line .spin {
    flex: none;
    width: 96px;
    margin-left: 7px;
}

.line.off {
    opacity: 1;
    color: #777;
}

.line.off .spin {
    border-color: #ccc;
}

.line.off em {
    background: #f2f2f2;
    opacity: 0.4;
}

.line.off label, .faded label {
    opacity: 0.35;
    filter: grayscale(1);
}

.icons {
    display: flex;
    gap: 8px;
    margin-left: 5px;
}

.icons svg {
    width: 14px;
    height: 14px;
}

.corner {
    opacity: 0.45;
}

h4 {
    height: 20px;
    margin: 0;
    padding: 4px 3px 0 3px;
    display: flex;
    align-items: center;
    font-size: 9px;
    font-weight: normal;
    letter-spacing: -0.15px;
}

.color {
    width: 96px;
    height: 19px;
    margin-left: 7px;
    display: flex;
    border: 1px solid #ccc;
}

.color b {
    flex: 1;
    margin: 2px;
    border: 1px solid #666;
}

.color .white { background: #fff; }
.color .black { background: #000; }

.color u {
    width: 15px;
    display: grid;
    place-items: center;
    border-left: 1px solid #ccc;
}

.color .drop {
    opacity: 0.2;
}

.slider {
    width: 149px;
    height: 13px;
    margin-left: 6px;
    display: flex;
    align-items: center;
    justify-content: center;
    border: solid #ccc;
    border-width: 0 1px;
    background: linear-gradient(#ccc, #ccc) 0 5px / 100% 1px no-repeat, linear-gradient(#ddd, #ddd) 0 8px / 100% 1px no-repeat;
}

.slider i {
    width: 5px;
    height: 18px;
    flex: none;
    background: #f2f2f2;
    border: 1px solid #bbb;
}

.link {
    height: 17px;
    display: flex;
    align-items: center;
    padding-left: 52px;
    color: #bbb;
    letter-spacing: -0.4px;
}

.link .box {
    width: 11px;
    height: 11px;
    margin-right: 2px;
    line-height: 10px;
    text-align: center;
    color: #888;
    background: #fff;
    border: 1px solid #ccc;
}

.foot {
    margin: 6px 1px 0 3px;
    padding-top: 3px;
    border-top: 1px solid #d5d5d5;
    display: flex;
    justify-content: flex-end;
}

.foot button {
    width: 67px;
    background: transparent;
    border-color: #ccc;
    color: #ccc;
}

/* Color palettes */
.palette {
    width: 16.5px;
    display: flex;
    flex-direction: column;
    align-items: center;
    padding-top: 9px;
    border-left: 1px solid #ddd;
}

.palette svg {
    width: 12px;
    height: 12px;
    margin-top: 6px;
}

.palette .caret {
    width: 10px;
    height: 10px;
    margin-top: 3px;
    opacity: 0.5;
}

.palette .light {
    opacity: 0.3;
}

.swatches {
    width: 14px;
    height: 484px;
    margin-top: 3px;
    overflow: hidden;
}

.swatches > i, .swatches > svg {
    display: block;
    width: 14px;
    height: 14px;
    margin: 0;
    border: 1px solid rgba(60, 60, 60, 0.45);
    border-top: 0;
}

/* Status bar */
.status {
    height: 28px;
    display: flex;
    align-items: center;
    border-top: 1px solid #d5d5d5;
}

.coords {
    width: 86px;
    padding-left: 5px;
    letter-spacing: -0.1px;
}

.selected {
    width: 769px;
    padding-left: 45px;
}

.status > svg {
    width: 14px;
    height: 14px;
    margin-left: 45px;
}

.status .bucket {
    margin-left: 12px;
}

.status .none {
    width: 17px;
    height: 17px;
    margin-left: 1px;
}

.fillname {
    width: 96px;
    padding-left: 3px;
}

.status b {
    width: 16px;
    height: 16px;
    margin: 0 4px 0 1px;
    background: #1d1d1d;
}

/* Taskbar */
.taskbar {
    height: 32px;
    display: flex;
    align-items: center;
    border-top: 1px solid #6d9dbb;
    background:
        linear-gradient(to top right, transparent 44%, rgba(170, 200, 225, 0.55) 50%, transparent 56%) 855px 0 / 66px 31px no-repeat,
        linear-gradient(90deg, #37799f 0, #3a83a5 300px, #2a76a0 530px, #1f6699 700px, #185a93 880px, #1b5590 960px, #1b4a80 1120px, #163c68 1280px);
}

.start {
    width: 30px;
    height: 30px;
    margin: 0 11px 0 7px;
}

.task {
    width: 106px;
    height: 31px;
    margin-right: 2px;
    padding: 0 5px;
    display: flex;
    align-items: center;
    gap: 4px;
    color: #fff;
    font-size: 10.3px;
    letter-spacing: -0.3px;
    white-space: nowrap;
    border: 1px solid rgba(190, 225, 240, 0.6);
    background: linear-gradient(rgba(255, 255, 255, 0.35), rgba(255, 255, 255, 0.08) 60%, rgba(255, 255, 255, 0.14));
}

.task svg {
    width: 26px;
    height: 26px;
}

.task.snip {
    width: 44px;
    border-color: transparent;
    background: none;
}

.task.active {
    background: linear-gradient(rgba(255, 255, 255, 0.6), rgba(255, 255, 255, 0.3));
}

.tray {
    margin-left: auto;
    display: flex;
    gap: 6px;
}

.tray svg {
    width: 14px;
    height: 14px;
}

.clock {
    width: 56px;
    margin: 0 3px 0 7px;
    color: #fff;
    font-size: 10px;
    line-height: 15px;
    letter-spacing: -0.2px;
    text-align: center;
}

.peek {
    width: 8px;
    height: 31px;
    border: 1px solid #587a9b;
    background: rgba(255, 255, 255, 0.15);
}
```
